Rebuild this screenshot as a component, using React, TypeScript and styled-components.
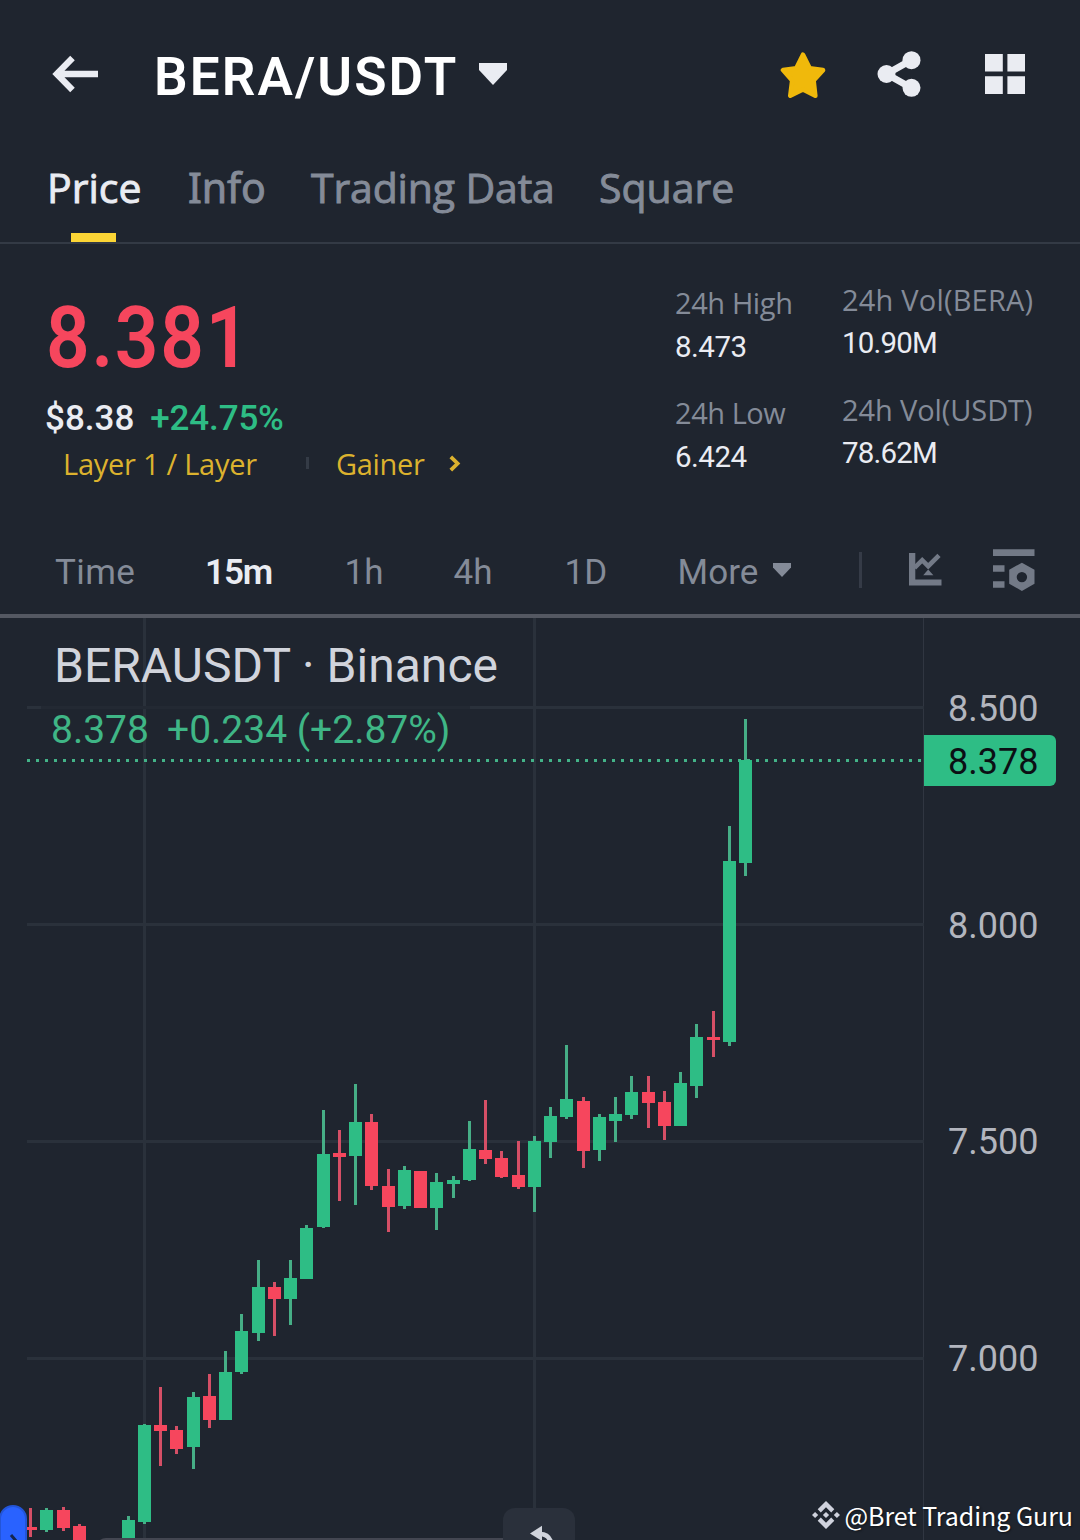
import React from "react";
import styled, { createGlobalStyle } from "styled-components";

const C = {
  bg: "#1f252f",
  line: "#333a45",
  grid: "#2a313b",
  text: "#eaecf2",
  muted: "#848b98",
  up: "#2ebd85",
  upWick: "#46ae86",
  down: "#f6465d",
  downWick: "#d54f66",
  gold: "#f0b90b",
  tag: "#dcb22e",
};

const sans = `Roboto, "Liberation Sans", sans-serif`;
const human = `"Open Sans", Roboto, sans-serif`;

const GlobalStyle = createGlobalStyle`
  * { box-sizing: border-box; }
  body { margin: 0; background: ${C.bg}; font-family: ${sans}; }
`;

const Screen = styled.main`
  width: 1080px;
  height: 1540px;
  overflow: hidden;
  background: ${C.bg};
  color: ${C.text};
  display: flex;
  flex-direction: column;
`;

const Header = styled.header`
  height: 148px;
  padding: 0 55px 0 52px;
  display: flex;
  align-items: center;
  flex: none;
`;

const Pair = styled.h1`
  margin: 0 0 0 54px;
  width: 325px;
  font-size: 53px;
  font-weight: 600;
  line-height: 64px;
  padding-top: 5px;
  letter-spacing: 2.1px;
  color: #fff;
  white-space: nowrap;
`;

const HeaderActions = styled.div`
  margin-left: auto;
  display: flex;
  align-items: center;
`;

const Tabs = styled.nav`
  height: 96px;
  flex: none;
  display: grid;
  grid-template-columns: 141px 123px 288px 1fr;
  padding-left: 47px;
  border-bottom: 2px solid ${C.line};
`;

const Tab = styled.a<{ $active?: boolean; $spacing: number; $font?: string }>`
  position: relative;
  padding-top: 9px;
  font-family: ${(p) => p.$font ?? human};
  font-stretch: 88%;
  font-size: 41px;
  font-weight: 400;
  -webkit-text-stroke: 0.9px currentColor;
  line-height: 60px;
  letter-spacing: ${(p) => p.$spacing}px;
  white-space: nowrap;
  color: ${(p) => (p.$active ? C.text : C.muted)};
`;

const TabMarker = styled.span`
  position: absolute;
  left: 24px;
  bottom: 0;
  width: 45px;
  height: 9px;
  background: #fcd535;
`;

const Summary = styled.section`
  height: 284px;
  flex: none;
  display: flex;
  justify-content: space-between;
  padding-left: 46px;
`;

const Quote = styled.div`
  padding-top: 44px;
`;

const LastPrice = styled.div`
  font-size: 85px;
  font-weight: 600;
  line-height: 100px;
  letter-spacing: 1.9px;
  transform: scaleX(0.9);
  transform-origin: left center;
  color: ${C.down};
`;

const Change = styled.div`
  display: flex;
  gap: 16px;
  font-size: 35px;
  font-weight: 500;
  line-height: 42px;
  margin-top: 10px;
  margin-left: -1px;
  letter-spacing: 0;
`;

const Percent = styled.span`
  letter-spacing: -0.15px;
  color: ${C.up};
`;

const Tags = styled.div`
  display: flex;
  align-items: center;
  padding-left: 17px;
  margin-top: 2px;
  height: 42px;
  font-family: ${human};
  font-stretch: 90%;
  font-size: 29px;
  color: ${C.tag};
`;

const TagName = styled.span<{ $width: number; $spacing: number }>`
  width: ${(p) => p.$width}px;
  letter-spacing: ${(p) => p.$spacing}px;
  white-space: nowrap;
`;

const TagDivider = styled.i`
  width: 3px;
  height: 12px;
  margin-right: 27px;
  background: #343b46;
`;

const Stats = styled.dl`
  margin: 0;
  display: grid;
  grid-template-columns: 167px 238px;
`;

const StatColumn = styled.div<{ $top: number }>`
  padding-top: ${(p) => p.$top}px;
`;

const Stat = styled.div`
  height: 110px;
`;

const StatLabel = styled.dt<{ $spacing: number }>`
  font-family: ${human};
  font-stretch: 88%;
  font-size: 29px;
  line-height: 42px;
  letter-spacing: ${(p) => p.$spacing}px;
  white-space: nowrap;
  color: ${C.muted};
`;

const StatValue = styled.dd<{ $volume?: boolean }>`
  margin: ${(p) => (p.$volume ? 1 : 2)}px 0 0;
  font-size: 29.5px;
  line-height: 43px;
  letter-spacing: ${(p) => (p.$volume ? -0.8 : -0.5)}px;
`;

const Intervals = styled.nav`
  height: 90px;
  flex: none;
  display: flex;
  align-items: center;
  padding: 0 45px 3px 55px;
  border-bottom: 4px solid #545862;
`;

const Interval = styled.a<{ $width: number; $spacing?: number; $active?: boolean }>`
  width: ${(p) => p.$width}px;
  font-size: 35px;
  line-height: 42px;
  padding-top: 7px;
  letter-spacing: ${(p) => p.$spacing ?? 0}px;
  font-weight: ${(p) => (p.$active ? 600 : 400)};
  color: ${(p) => (p.$active ? C.text : C.muted)};
  white-space: nowrap;
`;

const ToolDivider = styled.i`
  width: 3px;
  height: 36px;
  margin: 0 47px 0 68px;
  background: #353b47;
`;

const Chart = styled.section`
  position: relative;
  flex: 1;
  min-height: 0;
  display: flex;
`;

const Legend = styled.div`
  position: absolute;
  left: 52px;
  top: 18px;
`;

const Symbol = styled.div`
  font-size: 48px;
  line-height: 60px;
  letter-spacing: 0.03px;
  padding-left: 2px;
  color: #d1d4dc;
  white-space: nowrap;
`;

const LegendValues = styled.div`
  display: flex;
  width: 418px;
  height: 50px;
  font-size: 39px;
  line-height: 50px;
  margin-top: 9px;
  margin-left: -1px;
  white-space: pre;
  color: #3fb686;
`;

const LegendValue = styled.span<{ $width?: number }>`
  width: ${(p) => (p.$width ? `${p.$width}px` : "auto")};
`;

const Axis = styled.div`
  width: 156px;
  margin-top: -17px;
  padding-left: 24px;
`;

const AxisLabel = styled.div`
  height: 216.6px;
  line-height: 217px;
  font-size: 36px;
  color: #b2b5be;
`;

const PriceBadge = styled.div`
  position: absolute;
  left: 924px;
  top: 117px;
  width: 132px;
  height: 51px;
  padding-left: 24px;
  border-radius: 0 6px 6px 0;
  background: ${C.up};
  color: #0b0f14;
  font-size: 36px;
  line-height: 54px;
`;

const UndoButton = styled.button`
  position: absolute;
  left: 503px;
  top: 890px;
  width: 72px;
  height: 60px;
  border: 0;
  border-radius: 12px;
  padding: 17px 0 0 25px;
  display: flex;
  align-items: flex-start;
  background: #2a303b;
`;

const BlueHandle = styled.div`
  position: absolute;
  left: -1px;
  top: 887px;
  width: 28px;
  height: 60px;
  padding: 26px 0 0 8px;
  border-radius: 14px;
  border: 2px solid #2355d8;
  background: #2962ff;
`;

const SheetEdge = styled.div`
  position: absolute;
  left: 96px;
  top: 920px;
  width: 407px;
  height: 20px;
  border-radius: 10px 0 0 0;
  background: #434651;
`;

const Watermark = styled.div`
  position: absolute;
  right: 7px;
  bottom: 5px;
  display: flex;
  align-items: center;
  gap: 4px;
  font-family: "Noto Sans CJK SC", sans-serif;
  font-size: 25px;
  line-height: 40px;
  letter-spacing: -0.05px;
  color: #fff;
  white-space: nowrap;
  text-shadow: 1px 1px 2px rgba(0, 0, 0, 0.5);
`;

type Candle = [x: number, high: number, top: number, bottom: number, low: number, up: 0 | 1];

const candles: Candle[] = [
  [30.5, 1508, 1527, 1530, 1537, 0],
  [46.5, 1508, 1510, 1530, 1532, 1],
  [63.5, 1507, 1510, 1528, 1531, 0],
  [79.5, 1524, 1526, 1545, 1545, 0],
  [128.5, 1516, 1520, 1538, 1538, 1],
  [144.5, 1424, 1425, 1522, 1524, 1],
  [160.5, 1387, 1425, 1431, 1466, 0],
  [176.5, 1426, 1430, 1449, 1454, 0],
  [193.5, 1392, 1397, 1447, 1469, 1],
  [209.5, 1374, 1396, 1420, 1428, 0],
  [225.5, 1351, 1372, 1420, 1420, 1],
  [241.5, 1314, 1331, 1372, 1374, 1],
  [258.5, 1260, 1287, 1333, 1341, 1],
  [274.5, 1282, 1287, 1299, 1336, 0],
  [290.5, 1260, 1278, 1299, 1325, 1],
  [306.5, 1225, 1228, 1279, 1279, 1],
  [323.5, 1110, 1154, 1227, 1228, 1],
  [339.5, 1130, 1153, 1157, 1201, 0],
  [355.5, 1084, 1122, 1156, 1205, 1],
  [371.5, 1114, 1122, 1186, 1190, 0],
  [388.5, 1169, 1186, 1207, 1232, 0],
  [404.5, 1166, 1170, 1206, 1209, 1],
  [420.5, 1171, 1171, 1208, 1208, 0],
  [436.5, 1173, 1182, 1208, 1230, 1],
  [453.5, 1176, 1180, 1184, 1198, 1],
  [469.5, 1121, 1149, 1180, 1181, 1],
  [485.5, 1100, 1150, 1159, 1164, 0],
  [501.5, 1151, 1158, 1177, 1178, 0],
  [518.5, 1141, 1175, 1187, 1189, 0],
  [534.5, 1136, 1141, 1187, 1212, 1],
  [550.5, 1107, 1116, 1142, 1158, 1],
  [566.5, 1045, 1099, 1117, 1119, 1],
  [583.5, 1097, 1101, 1151, 1168, 0],
  [599.5, 1114, 1117, 1150, 1161, 1],
  [615.5, 1097, 1114, 1121, 1142, 1],
  [631.5, 1076, 1092, 1115, 1119, 1],
  [648.5, 1076, 1092, 1103, 1128, 0],
  [664.5, 1091, 1102, 1126, 1140, 0],
  [680.5, 1072, 1083, 1126, 1126, 1],
  [696.5, 1024, 1037, 1086, 1098, 1],
  [713.5, 1011, 1037, 1040, 1057, 0],
  [729.5, 826, 861, 1042, 1046, 1],
  [745.5, 719, 760, 863, 876, 1],
];

const Plot = () => (
  <svg width="924" height="922" viewBox="0 618 924 922" shapeRendering="crispEdges">
    {[144.5, 534.5].map((x) => (
      <rect key={x} x={x - 1.5} y={618} width={3} height={922} fill={C.grid} />
    ))}
    <rect x={923} y={618} width={1} height={922} fill="#303641" />
    <rect x={27} y={706} width={14} height={3} fill={C.grid} />
    <rect x={41} y={706} width={429} height={3} fill="#232933" />
    <rect x={470} y={706} width={454} height={3} fill={C.grid} />
    {[923, 1140, 1357].map((y) => (
      <rect key={y} x={27} y={y} width={897} height={3} fill={C.grid} />
    ))}
    <line x1={27} x2={922} y1={760.5} y2={760.5} stroke="#43b388" strokeWidth={3} strokeDasharray="3 6" />
    {candles.map(([x, high, top, bottom, low, up]) => (
      <g key={x}>
        <rect x={x - 1.5} y={high} width={3} height={low - high} fill={up ? C.upWick : C.downWick} />
        <rect x={x - 6.5} y={top} width={13} height={bottom - top} fill={up ? C.up : C.down} />
      </g>
    ))}
  </svg>
);

const BackIcon = () => (
  <svg width="48" height="40" viewBox="0 0 48 40" fill="none" stroke={C.text} strokeWidth="6.4">
    <path d="M20.5 4L4.8 20L20.5 36M5 20H46" />
  </svg>
);

const Caret = ({ w, h, color }: { w: number; h: number; color: string }) => (
  <svg width={w} height={h} viewBox="0 0 28 22" preserveAspectRatio="none">
    <path d="M0 0H28V7L14 22L0 7Z" fill={color} />
  </svg>
);

const StarIcon = () => (
  <svg width="46" height="47" viewBox="0 -0.7 46 47">
    <path
      d="M23 3L29.7 16.6L43 18.4L33.6 28.8L35.3 44L23 37.8L10.3 44L12.2 28.8L3 18.4L16.3 16.6Z"
      fill={C.gold}
      stroke={C.gold}
      strokeWidth="4.6"
      strokeLinejoin="round"
    />
  </svg>
);

const ShareIcon = () => (
  <svg width="44" height="46" viewBox="0 0 44 46" fill={C.text}>
    <path d="M34.5 9L9.5 23L34.5 37" fill="none" stroke={C.text} strokeWidth="6.8" />
    <circle cx="9.5" cy="23" r="9" />
    <circle cx="34.5" cy="9.2" r="9" />
    <circle cx="34.5" cy="36.8" r="9" />
  </svg>
);

const GridIcon = () => (
  <svg width="40" height="40" viewBox="0 0 40 40" fill={C.text}>
    <path d="M0 0H17.8V17.5H0ZM22.4 0H40V17.5H22.4ZM0 22.3H17.8V40H0ZM22.4 22.3H40V40H22.4Z" />
  </svg>
);

const TagChevron = () => (
  <svg width="12" height="17" viewBox="0 0 12 17" fill="none" stroke={C.tag} strokeWidth="3.8">
    <path d="M1.8 1.8L8.6 8.5L1.8 15.2" />
  </svg>
);

const IndicatorIcon = () => (
  <svg width="33" height="33" viewBox="0 0 33 33" fill="#737a87">
    <path d="M0 0H6.3V26.4H32.5V32.5H0Z" />
    <path d="M5.5 14.8L13.2 7.2L19.2 13.2L30 2.4" fill="none" stroke="#737a87" strokeWidth="4.6" />
    <path d="M14.2 22.3L19.2 16.6L24.4 22.3Z" />
  </svg>
);

const SettingsIcon = () => (
  <svg width="42" height="43" viewBox="0 -0.7 42 43" fill="#737a87">
    <path d="M0 0.5H41.5V7.3H0ZM0 16.5H11.5V23H0ZM0 32.5H11.5V39H0Z" />
    <path fillRule="evenodd" d="M28.9 14L41.5 21V35L28.9 42.2L16.2 35V21ZM28.9 23.2A5.2 5.2 0 1 0 28.9 33.6A5.2 5.2 0 1 0 28.9 23.2Z" />
  </svg>
);

const UndoIcon = () => (
  <svg width="28" height="26" viewBox="0 0 28 26">
    <path d="M2 8.5L14 0.8V16Z" fill="#d1d4dc" />
    <path d="M12 9C19 9 23 13 24 22" fill="none" stroke="#d1d4dc" strokeWidth="4.6" />
  </svg>
);

const HandleArrow = () => (
  <svg width="10" height="14" viewBox="0 0 10 14" fill="none" stroke="#14264f" strokeWidth="3">
    <path d="M2 1L8 8L2 14" />
  </svg>
);

const DiamondLogo = () => (
  <svg width="28" height="28" viewBox="0 0 28 28" fill="#cfd2dd">
    <path d="M14 0L22.3 8.3L19.2 11.4L14 6.2L8.8 11.4L5.7 8.3ZM3.1 10.9L6.2 14L3.1 17.1L0 14ZM14 10.9L17.1 14L14 17.1L10.9 14ZM24.9 10.9L28 14L24.9 17.1L21.8 14ZM8.8 16.6L14 21.8L19.2 16.6L22.3 19.7L14 28L5.7 19.7Z" />
  </svg>
);

const ShareSlot = styled.span`
  display: flex;
  margin: 0 64px 0 51px;
`;
const SettingsSlot = styled.span`
  display: flex;
  margin-left: auto;
`;

const priceTicks = ["8.500", "8.000", "7.500", "7.000"];

export default function App() {
  return (
    <>
      <GlobalStyle />
      <Screen>
        <Header>
          <BackIcon />
          <Pair>BERA/USDT</Pair>
          <Caret w={28} h={22} color={C.text} />
          <HeaderActions>
            <StarIcon />
            <ShareSlot>
              <ShareIcon />
            </ShareSlot>
            <GridIcon />
          </HeaderActions>
        </Header>

        <Tabs>
          <Tab $active $spacing={0}>
            Price
            <TabMarker />
          </Tab>
          <Tab $spacing={-0.15} $font={`"Noto Sans", sans-serif`}>Info</Tab>
          <Tab $spacing={-0.15}>Trading Data</Tab>
          <Tab $spacing={0}>Square</Tab>
        </Tabs>

        <Summary>
          <Quote>
            <LastPrice>8.381</LastPrice>
            <Change>
              <span>$8.38</span>
              <Percent>+24.75%</Percent>
            </Change>
            <Tags>
              <TagName $width={243} $spacing={-0.25}>Layer 1 / Layer</TagName>
              <TagDivider />
              <TagName $width={113} $spacing={-0.3}>Gainer</TagName>
              <TagChevron />
            </Tags>
          </Quote>
          <Stats>
            <StatColumn $top={38}>
              <Stat>
                <StatLabel $spacing={-0.4}>24h High</StatLabel>
                <StatValue>8.473</StatValue>
              </Stat>
              <Stat>
                <StatLabel $spacing={-0.45}>24h Low</StatLabel>
                <StatValue>6.424</StatValue>
              </Stat>
            </StatColumn>
            <StatColumn $top={35}>
              <Stat>
                <StatLabel $spacing={0.2}>24h Vol(BERA)</StatLabel>
                <StatValue $volume>10.90M</StatValue>
              </Stat>
              <Stat>
                <StatLabel $spacing={-0.1}>24h Vol(USDT)</StatLabel>
                <StatValue $volume>78.62M</StatValue>
              </Stat>
            </StatColumn>
          </Stats>
        </Summary>

        <Intervals>
          <Interval $width={150} $spacing={0.4}>Time</Interval>
          <Interval $width={139.5} $spacing={-1.1} $active>15m</Interval>
          <Interval $width={109}>1h</Interval>
          <Interval $width={111}>4h</Interval>
          <Interval $width={113}>1D</Interval>
          <Interval $width={95.5} $spacing={0.1}>More</Interval>
          <Caret w={18} h={14} color={C.muted} />
          <ToolDivider />
          <IndicatorIcon />
          <SettingsSlot>
            <SettingsIcon />
          </SettingsSlot>
        </Intervals>

        <Chart>
          <Plot />
          <Axis>
            {priceTicks.map((t) => (
              <AxisLabel key={t}>{t}</AxisLabel>
            ))}
          </Axis>
          <PriceBadge>8.378</PriceBadge>
          <Legend>
            <Symbol>BERAUSDT · Binance</Symbol>
            <LegendValues>
              <LegendValue $width={116}>8.378</LegendValue>
              <LegendValue>+0.234 (+2.87%)</LegendValue>
            </LegendValues>
          </Legend>
          <SheetEdge />
          <BlueHandle>
            <HandleArrow />
          </BlueHandle>
          <UndoButton aria-label="Undo">
            <UndoIcon />
          </UndoButton>
          <Watermark>
            <DiamondLogo />
            @Bret Trading Guru
          </Watermark>
        </Chart>
      </Screen>
    </>
  );
}
